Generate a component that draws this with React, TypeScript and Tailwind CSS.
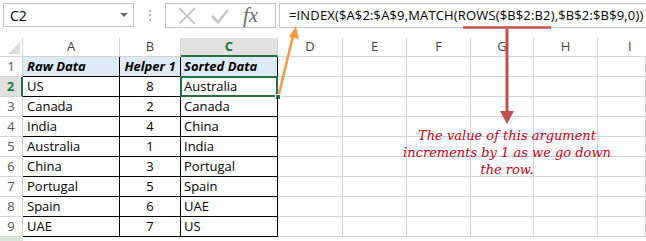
import React from 'react'

const cols = ['A', 'B', 'C', 'D', 'E', 'F', 'G', 'H', 'I']
const colWidths = [97, 61, 97, 65, 64, 64, 63, 64, 48]

const rows: [string, string, string][] = [
  ['US', '8', 'Australia'],
  ['Canada', '2', 'Canada'],
  ['India', '4', 'China'],
  ['Australia', '1', 'India'],
  ['China', '3', 'Portugal'],
  ['Portugal', '5', 'Spain'],
  ['Spain', '6', 'UAE'],
  ['UAE', '7', 'US'],
]

const gridCols = `23px ${colWidths.map((w) => `${w}px`).join(' ')}`

function FormulaBar() {
  return (
    <div className="h-[38px] flex items-start pt-[3px] pl-[3px] bg-white">
      {/* Name box */}
      <div className="w-[131px] h-[24px] border border-[#c6c6c6] flex items-center justify-between pl-[6px] pr-[5px] text-[14px] text-black">
        <span>C2</span>
        <span className="w-0 h-0 border-l-[4px] border-r-[4px] border-t-[4px] border-l-transparent border-r-transparent border-t-[#6b6b6b]" />
      </div>
      <div className="w-[31px] h-[24px] flex items-center justify-center text-[#a0a0a0] text-[14px] leading-none">⋮</div>
      {/* Buttons */}
      <div className="w-[111px] h-[25px] border border-[#c6c6c6] flex items-center">
        <svg width="20" height="18" viewBox="0 0 20 18" className="ml-[11px]">
          <path d="M2 1 L18 17 M18 1 L2 17" stroke="#c4c4c4" strokeWidth="1.8" fill="none" />
        </svg>
        <svg width="18" height="16" viewBox="0 0 18 16" className="ml-[14px]">
          <path d="M1 8 L7 14 L17 2" stroke="#c4c4c4" strokeWidth="2.6" fill="none" />
        </svg>
        <span className="ml-[14px] text-[21px] italic text-[#6b6b6b] leading-none" style={{ fontFamily: '"Liberation Serif", serif' }}>
          fx
        </span>
      </div>
      {/* Formula */}
      <div className="ml-[3px] flex-1 h-[25px] border border-[#c6c6c6] border-r-0 flex items-center pl-[9px] text-[13px] tracking-[0.15px] text-black whitespace-nowrap overflow-hidden">
        =INDEX($A$2:$A$9,MATCH(ROWS($B$2:B2),$B$2:$B$9,0))
      </div>
    </div>
  )
}

function RowHead({ n, active }: { n: number; active?: boolean }) {
  return active ? (
    <div className="h-[20px] bg-[#e1e1e1] border-r-2 border-r-[#217346] border-b border-[#d4d4d4] flex items-center justify-center text-[13px] font-bold text-[#217346]">
      {n}
    </div>
  ) : (
    <div className="h-[20px] bg-white border-r border-b border-[#d4d4d4] flex items-center justify-center text-[13px] text-[#555]">
      {n}
    </div>
  )
}

function Sheet() {
  return (
    <div className="grid" style={{ gridTemplateColumns: gridCols }}>
      {/* Corner */}
      <div className="h-[19px] border-r border-b border-[#d4d4d4] bg-white flex items-end justify-end pr-[2px] pb-[2px]">
        <svg width="12" height="12" viewBox="0 0 12 12">
          <polygon points="12,0 12,12 0,12" fill="#dcdcdc" />
        </svg>
      </div>
      {cols.map((c) =>
        c === 'C' ? (
          <div key={c} className="h-[19px] bg-[#e1e1e1] border-r border-[#d4d4d4] border-b-2 border-b-[#217346] flex items-center justify-center text-[13px] font-bold text-[#217346]">
            {c}
          </div>
        ) : c === 'I' ? (
          <div key={c} className="h-[19px] bg-white border-b border-[#d4d4d4] flex items-center justify-start pl-[30px] text-[13px] text-[#444]">
            {c}
          </div>
        ) : (
          <div key={c} className="h-[19px] bg-white border-r border-b border-[#d4d4d4] flex items-center justify-center text-[13px] text-[#444]">
            {c}
          </div>
        ),
      )}

      {/* Row 1 */}
      <RowHead n={1} />
      <div className="h-[20px] bg-[#ddebf7] border-r border-b border-black pl-[4px] flex items-end text-[13px] font-bold italic text-black">Raw Data</div>
      <div className="h-[20px] bg-[#ddebf7] border-r border-b border-black flex items-end justify-center text-[13px] font-bold italic text-black">Helper 1</div>
      <div className="h-[20px] bg-[#ddebf7] border-r border-b border-black pl-[3px] flex items-end text-[13px] font-bold italic text-black">Sorted Data</div>
      {cols.slice(3).map((c) => (
        <div key={c} className="h-[20px] border-r border-b border-[#d4d4d4]" />
      ))}

      {rows.map((r, i) => (
        <React.Fragment key={i}>
          <RowHead n={i + 2} active={i === 0} />
          <div className="h-[20px] border-r border-b border-black pl-[4px] flex items-end text-[13px] text-black">{r[0]}</div>
          <div className="h-[20px] border-r border-b border-black flex items-end justify-center text-[13px] text-black">{r[1]}</div>
          <div className="h-[20px] border-r border-b border-black pl-[3px] flex items-end text-[13px] text-black relative">
            {r[2]}
            {i === 0 && (
              <>
                <span className="absolute -left-[1px] -top-[1px] -right-[1px] -bottom-[1px] border-2 border-[#217346]" />
                <span className="absolute -right-[4px] -bottom-[4px] w-[6px] h-[6px] bg-[#217346] border border-white" />
              </>
            )}
          </div>
          {cols.slice(3).map((c) => (
            <div key={c} className="h-[20px] border-r border-b border-[#d4d4d4]" />
          ))}
        </React.Fragment>
      ))}
      <div className="h-[6px] bg-[#d6e6d8]" />
    </div>
  )
}

export default function App() {
  return (
    <div className="relative w-[646px] h-[241px] overflow-hidden bg-white" style={{ fontFamily: '"Open Sans", "Noto Sans", sans-serif' }}>
      <FormulaBar />
      <Sheet />

      {/* Annotation arrows */}
      <svg className="absolute inset-0 pointer-events-none" width="646" height="241">
        <line x1="463" y1="27.5" x2="551" y2="27.5" stroke="#c0504d" strokeWidth="2.5" />
        <line x1="507" y1="29" x2="507" y2="116" stroke="#c0504d" strokeWidth="3" />
        <polygon points="500,111 514,111 507,124" fill="#c0504d" />
        <line x1="279" y1="94" x2="293" y2="36" stroke="#f79646" strokeWidth="2.5" />
        <polygon points="289,37 299,39 296,26" fill="#f79646" />
      </svg>
      <div
        className="absolute left-[387px] top-[127px] w-[240px] text-center text-[13px] leading-[17px] italic text-[#c00020]"
        style={{ fontFamily: '"DejaVu Serif", serif' }}
      >
        The value of this argument
        <br />
        increments by 1 as we go down
        <br />
        the row.
      </div>
    </div>
  )
}
